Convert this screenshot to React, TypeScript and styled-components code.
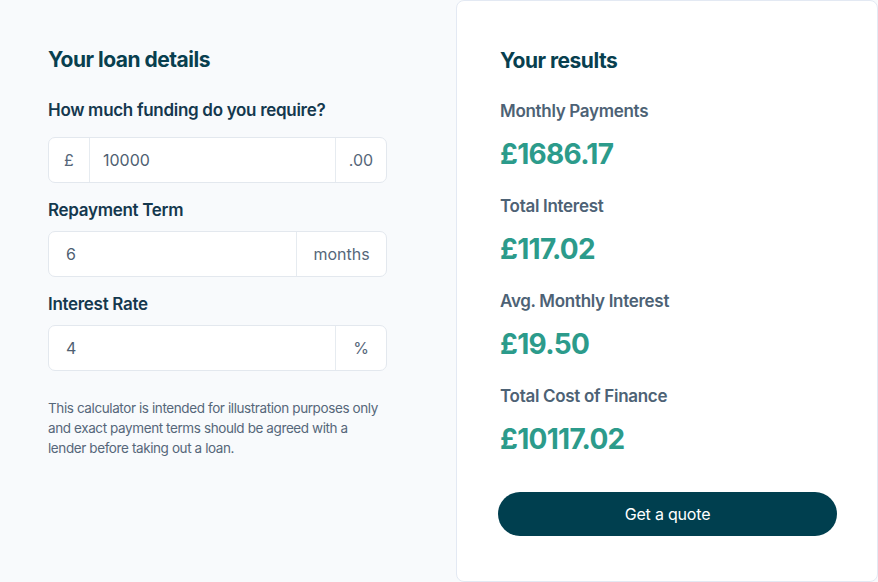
import styled, { createGlobalStyle } from 'styled-components';

const GlobalStyle = createGlobalStyle`
  html, body {
    margin: 0;
    padding: 0;
    background: #f8fafc;
  }
  body {
    font-family: Inter, 'Liberation Sans', sans-serif;
    -webkit-font-smoothing: antialiased;
  }
`;

const Page = styled.div`
  display: flex;
  width: 878px;
  height: 582px;
  background: #f8fafc;
`;

const Details = styled.section`
  width: 339px;
  padding: 46px 69px 0 48px;
  display: flex;
  flex-direction: column;
`;

const Results = styled.section`
  box-sizing: border-box;
  width: 422px;
  height: 582px;
  padding: 46px 40px 0 43px;
  background: #ffffff;
  border: 1px solid #e3e9f3;
  border-radius: 8px;
  display: flex;
  flex-direction: column;
`;

const Heading = styled.h2`
  margin: 0 0 24px;
  font-size: 21px;
  line-height: 28px;
  font-weight: 700;
  color: #083f4f;
  letter-spacing: -0.5px;
`;

const Label = styled.label<{ $gap: number }>`
  display: block;
  margin: 0 0 ${({ $gap }) => $gap}px;
  font-size: 17px;
  line-height: 24px;
  font-weight: 600;
  color: #14384e;
  letter-spacing: -0.3px;
`;

const InputGroup = styled.div`
  display: flex;
  height: 46px;
  box-sizing: border-box;
  margin-bottom: 15px;
  background: #ffffff;
  border: 1px solid #e3e8ee;
  border-radius: 7px;
  overflow: hidden;
`;

const Addon = styled.span<{ $width: number; $side: 'left' | 'right' }>`
  flex: 0 0 ${({ $width }) => $width}px;
  display: flex;
  align-items: center;
  justify-content: center;
  font-size: 16px;
  color: #56677a;
  ${({ $side }) =>
    $side === 'left' ? 'border-right: 1px solid #e6ebf0;' : 'border-left: 1px solid #e6ebf0;'}
`;

const Field = styled.input<{ $inset?: number }>`
  flex: 1;
  min-width: 0;
  border: none;
  outline: none;
  background: transparent;
  padding: 0 0 0 ${({ $inset }) => $inset ?? 17}px;
  font-family: inherit;
  font-size: 16px;
  color: #4f5f72;
`;

const Disclaimer = styled.p`
  margin: 12px 0 0;
  font-size: 13.5px;
  line-height: 20px;
  color: #56677a;
  letter-spacing: -0.4px;
`;

const ResultLabel = styled.div`
  margin-bottom: 13px;
  font-size: 17px;
  line-height: 24px;
  font-weight: 600;
  color: #4d6275;
  letter-spacing: -0.3px;
`;

const ResultValue = styled.div`
  margin-bottom: 22px;
  font-size: 28px;
  line-height: 36px;
  font-weight: 700;
  color: #2c9b8b;
  letter-spacing: -0.7px;
`;

const QuoteButton = styled.button`
  margin: 13px 0 0 -2px;
  width: 339px;
  height: 44px;
  border: none;
  border-radius: 22px;
  background: #003f4f;
  color: #ffffff;
  font-family: inherit;
  font-size: 16px;
  font-weight: 400;
  letter-spacing: -0.2px;
  cursor: pointer;
`;

const results = [
  { label: 'Monthly Payments', value: '£1686.17' },
  { label: 'Total Interest', value: '£117.02' },
  { label: 'Avg. Monthly Interest', value: '£19.50' },
  { label: 'Total Cost of Finance', value: '£10117.02' },
];

export default function App() {
  return (
    <>
      <GlobalStyle />
      <Page>
        <Details>
          <Heading>Your loan details</Heading>
          <Label $gap={15}>How much funding do you require?</Label>
          <InputGroup>
            <Addon $width={40} $side="left">£</Addon>
            <Field defaultValue="10000" $inset={13} />
            <Addon $width={50} $side="right">.00</Addon>
          </InputGroup>
          <Label $gap={9}>Repayment Term</Label>
          <InputGroup>
            <Field defaultValue="6" />
            <Addon $width={89} $side="right">months</Addon>
          </InputGroup>
          <Label $gap={9}>Interest Rate</Label>
          <InputGroup>
            <Field defaultValue="4" />
            <Addon $width={50} $side="right">%</Addon>
          </InputGroup>
          <Disclaimer>
            This calculator is intended for illustration purposes only and exact payment terms
            should be agreed with a lender before taking out a loan.
          </Disclaimer>
        </Details>
        <Results>
          <Heading>Your results</Heading>
          {results.map((r) => (
            <div key={r.label}>
              <ResultLabel>{r.label}</ResultLabel>
              <ResultValue>{r.value}</ResultValue>
            </div>
          ))}
          <QuoteButton>Get a quote</QuoteButton>
        </Results>
      </Page>
    </>
  );
}
